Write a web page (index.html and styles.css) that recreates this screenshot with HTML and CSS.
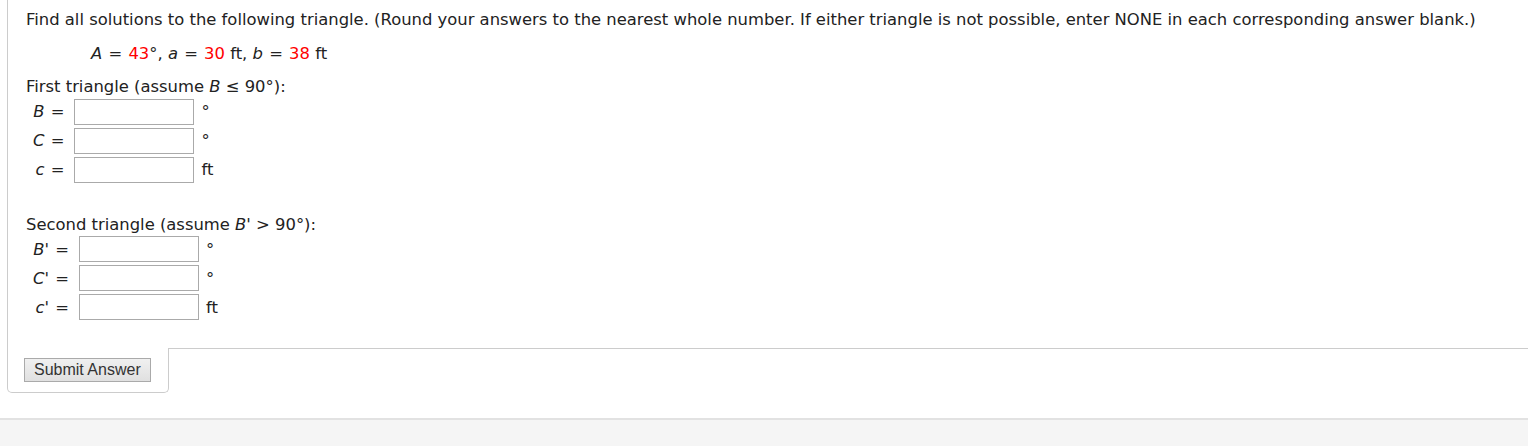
FILE: index.html
```html
<!DOCTYPE html>
<html>
<head>
<meta charset="utf-8">
<link rel="stylesheet" href="styles.css">
</head>
<body>
<div class="question">
  <p class="prompt">Find all solutions to the following triangle. (Round your answers to the nearest whole number. If either triangle is not possible, enter NONE in each corresponding answer blank.)</p>
  <p class="given"><i>A</i> <span class="eq">=</span> <span class="red">43</span>°, <i>a</i> <span class="eq">=</span> <span class="red">30</span> ft, <i>b</i> <span class="eq">=</span> <span class="red">38</span> ft</p>

  <p class="heading">First triangle (assume <i>B</i> ≤ 90°):</p>
  <div class="answers">
    <span class="lbl"><i>B</i> <span class="eq">=</span></span><input class="box" type="text"><span class="unit deg">°</span>
    <span class="lbl"><i>C</i> <span class="eq">=</span></span><input class="box" type="text"><span class="unit deg">°</span>
    <span class="lbl"><i>c</i> <span class="eq">=</span></span><input class="box" type="text"><span class="unit">ft</span>
  </div>

  <p class="heading second">Second triangle (assume <i>B</i>' &gt; 90°):</p>
  <div class="answers">
    <span class="lbl"><i>B</i>' <span class="eq">=</span></span><input class="box" type="text"><span class="unit deg">°</span>
    <span class="lbl"><i>C</i>' <span class="eq">=</span></span><input class="box" type="text"><span class="unit deg">°</span>
    <span class="lbl"><i>c</i>' <span class="eq">=</span></span><input class="box" type="text"><span class="unit">ft</span>
  </div>
</div>
<div class="footer">
  <div class="tab"><button class="submit" type="button">Submit Answer</button></div>
  <div class="filler"></div>
</div>
<div class="band"></div>
</body>
</html>
```
FILE: styles.css
```css
html, body {
  margin: 0;
  padding: 0;
  background: #fff;
}
body {
  font-family: "DejaVu Sans", Verdana, sans-serif;
  font-size: 16.4px;
  color: #222;
}
.question {
  margin-left: 7px;
  border-left: 1px solid #ccc;
  padding: 11px 0 28px 18px;
}
p {
  margin: 0;
  line-height: 18px;
}
.prompt {
  margin-bottom: 16px;
}
.given {
  padding-left: 65px;
  margin-bottom: 15px;
}
.eq {
  padding: 0 1px;
}
.red {
  color: #f00;
}
.heading {
  margin-bottom: 2.5px;
}
.heading.second {
  margin-top: 33px;
}
.answers {
  display: grid;
  grid-template-columns: auto 120px auto;
  justify-content: start;
  row-gap: 3px;
  align-items: center;
  padding-left: 7px;
}
.lbl {
  justify-self: end;
  padding-right: 9px;
  white-space: nowrap;
}
.box {
  box-sizing: border-box;
  width: 120px;
  height: 26px;
  margin: 0;
  border: 1px solid #aaa;
  background: #fff;
  padding: 0 4px;
}
.unit {
  padding-left: 7px;
}
.footer {
  display: flex;
  align-items: flex-start;
}
.tab {
  margin-left: 7px;
  width: 144px;
  padding: 10px 0 10px 16px;
  border: 1px solid #ccc;
  border-top: none;
  border-radius: 0 0 5px 5px;
}
.filler {
  flex: 1;
  border-top: 1px solid #ccc;
}
.submit {
  font-family: "Liberation Sans", Arial, sans-serif;
  font-size: 16px;
  color: #333;
  height: 24px;
  padding: 0 9px;
  background: linear-gradient(#f0f0f0, #e0e0e0);
  border: 1px solid #aaa;
  border-radius: 0;
}
.band {
  margin-top: 25px;
  height: 28px;
  background: #f5f5f5;
  border-top: 2px solid #e2e2e2;
}
```
